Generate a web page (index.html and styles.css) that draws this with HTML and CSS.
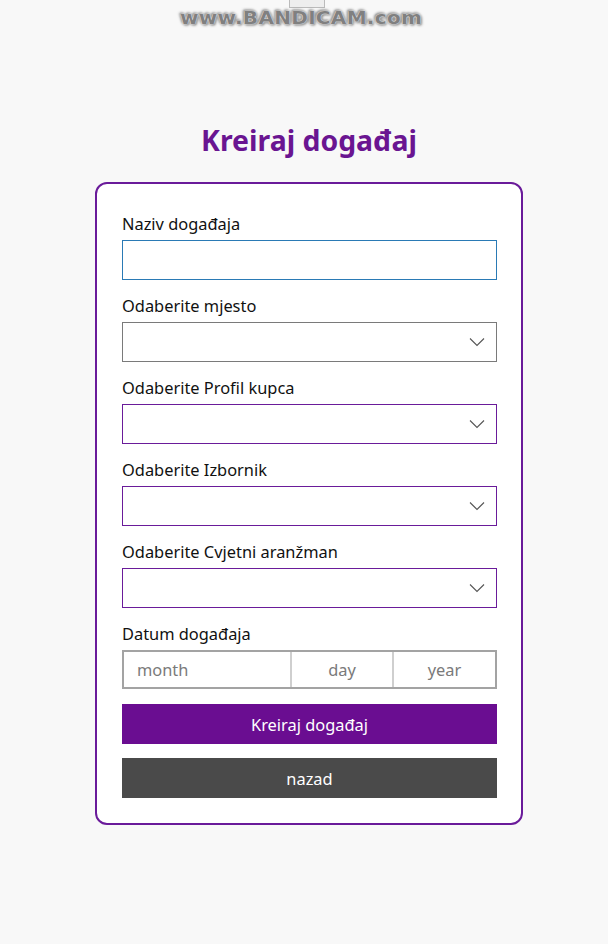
FILE: index.html
```html
<!DOCTYPE html>
<html lang="hr">

<head>
    <meta charset="UTF-8">
    <meta name="viewport" content="width=device-width, initial-scale=1.0">
    <title>Kreiraj događaj</title>
    <link rel="stylesheet" href="styles.css">
</head>

<body>
    <div class="watermark">
        <div class="watermark-tab"></div>
        <span>www.BANDICAM.com</span>
    </div>

    <div class="page">
        <h1 class="title">Kreiraj događaj</h1>

        <form class="card">
            <label class="field">
                <span class="field-label">Naziv događaja</span>
                <input type="text" class="text-input">
            </label>

            <label class="field">
                <span class="field-label">Odaberite mjesto</span>
                <span class="select-wrap">
                    <select class="select gray"></select>
                    <svg class="chevron" width="16" height="10" viewBox="0 0 16 10">
                        <path d="M1 1.5 L8 8.5 L15 1.5" fill="none" stroke="#555" stroke-width="1.1" />
                    </svg>
                </span>
            </label>

            <label class="field">
                <span class="field-label">Odaberite Profil kupca</span>
                <span class="select-wrap">
                    <select class="select"></select>
                    <svg class="chevron" width="16" height="10" viewBox="0 0 16 10">
                        <path d="M1 1.5 L8 8.5 L15 1.5" fill="none" stroke="#555" stroke-width="1.1" />
                    </svg>
                </span>
            </label>

            <label class="field">
                <span class="field-label">Odaberite Izbornik</span>
                <span class="select-wrap">
                    <select class="select"></select>
                    <svg class="chevron" width="16" height="10" viewBox="0 0 16 10">
                        <path d="M1 1.5 L8 8.5 L15 1.5" fill="none" stroke="#555" stroke-width="1.1" />
                    </svg>
                </span>
            </label>

            <label class="field">
                <span class="field-label">Odaberite Cvjetni aranžman</span>
                <span class="select-wrap">
                    <select class="select"></select>
                    <svg class="chevron" width="16" height="10" viewBox="0 0 16 10">
                        <path d="M1 1.5 L8 8.5 L15 1.5" fill="none" stroke="#555" stroke-width="1.1" />
                    </svg>
                </span>
            </label>

            <div class="field">
                <span class="field-label">Datum događaja</span>
                <div class="date">
                    <span class="date-part month">month</span>
                    <span class="date-part day">day</span>
                    <span class="date-part year">year</span>
                </div>
            </div>

            <button type="button" class="btn btn-primary">Kreiraj događaj</button>
            <button type="button" class="btn btn-back">nazad</button>
        </form>
    </div>
</body>

</html>
```

FILE: styles.css
```css
* {
    margin: 0;
    padding: 0;
    box-sizing: border-box;
}

body {
    background-color: #f8f8f8;
    font-family: "Noto Sans", "Open Sans", sans-serif;
    color: #111;
    width: 608px;
    height: 944px;
    overflow: hidden;
    position: relative;
}

/* recorder watermark */
.watermark {
    position: absolute;
    top: 0;
    left: 0;
    width: 100%;
    text-align: center;
    padding-left: 12px;
}

.watermark-tab {
    width: 36px;
    height: 8px;
    margin: 0 auto;
    border: 1px solid #bbb;
    border-top: none;
    background-color: #eee;
    transform: translateX(-3px);
}

.watermark span {
    display: block;
    margin-top: -2px;
    font-family: "DejaVu Sans", sans-serif;
    font-weight: bold;
    font-size: 20px;
    letter-spacing: 0.3px;
    color: #808080;
    transform: translateX(-9px) scaleY(0.9);
    text-shadow: 0 0 2px #fff, 0 0 2px #fff, 1px 1px 3px #444, -1px -1px 3px #444;
}

.page {
    padding-top: 118px;
}

.title {
    text-align: center;
    color: #6a1591;
    font-size: 28.4px;
    font-weight: bold;
    line-height: 44px;
    padding-left: 10px;
    margin-bottom: 20px;
}

.card {
    width: 428px;
    margin-left: 95px;
    background-color: #fff;
    border: 2px solid #6a1b9a;
    border-radius: 12px;
    padding: 30px 24px 25px 25px;
    display: flex;
    flex-direction: column;
}

.field {
    display: flex;
    flex-direction: column;
    margin-bottom: 16px;
}

.field-label {
    font-size: 16.4px;
    line-height: 20px;
    margin-bottom: 6px;
}

.text-input {
    height: 40px;
    width: 100%;
    border: 1px solid #2a7ab5;
    outline: none;
    font-size: 17px;
    padding: 0 10px;
}

.select-wrap {
    position: relative;
    display: block;
}

.select {
    appearance: none;
    -webkit-appearance: none;
    width: 100%;
    height: 40px;
    border: 1px solid #6a1b9a;
    border-radius: 0;
    background-color: #fff;
    outline: none;
}

.select.gray {
    border-color: #7a7a7a;
}

.chevron {
    position: absolute;
    right: 12px;
    top: 15px;
}

.date {
    display: flex;
    height: 39px;
    border: 2px solid #a3a3a3;
    margin-bottom: -1px;
}

.date-part {
    font-size: 16.4px;
    color: #7a7a7a;
    line-height: 35px;
}

.month {
    width: 168px;
    padding-left: 13px;
    border-right: 2px solid #cfcfcf;
}

.day {
    width: 102px;
    text-align: center;
    border-right: 2px solid #cfcfcf;
}

.year {
    flex: 1;
    text-align: center;
}

.btn {
    height: 40px;
    border: none;
    color: #fff;
    font-family: inherit;
    font-size: 16.4px;
    cursor: pointer;
}

.btn-primary {
    background-color: #6a0d91;
    margin-bottom: 14px;
}

.btn-back {
    background-color: #4a4a4a;
}
```
